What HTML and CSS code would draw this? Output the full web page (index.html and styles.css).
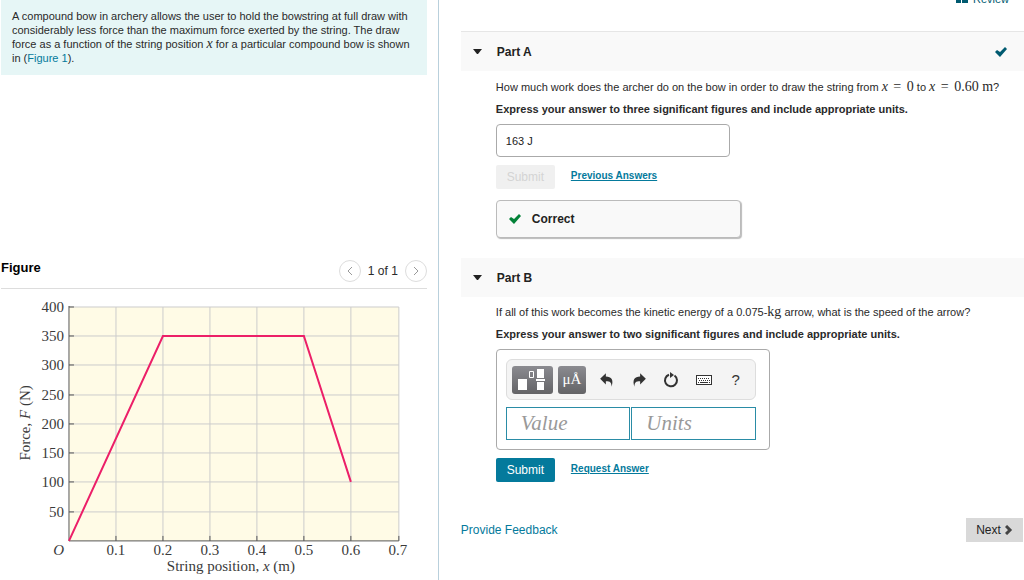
FILE: index.html
```html
<!DOCTYPE html>
<html lang="en">
  <head>
    <meta charset="UTF-8" />
    <meta name="viewport" content="width=device-width, initial-scale=1.0" />
    <title>Compound Bow</title>
    <link rel="stylesheet" href="styles.css" />
  </head>
  <body>
    <div class="page">
      <section class="left-pane">
        <div class="prompt">
          A compound bow in archery allows the user to hold the bowstring at full draw with
          considerably less force than the maximum force exerted by the string. The draw
          force as a function of the string position <i class="math">x</i> for a particular compound bow is shown
          in (<a href="#figure">Figure 1</a>).
        </div>

        <div class="figure" id="figure">
          <div class="figure-header">
            <h2>Figure</h2>
            <div class="pager">
              <button type="button" class="round" aria-label="Previous figure">
                <svg width="8" height="12" viewBox="0 0 8 12"><path d="M6 2 L2 6 L6 10" /></svg>
              </button>
              <span>1 of 1</span>
              <button type="button" class="round" aria-label="Next figure">
                <svg width="8" height="12" viewBox="0 0 8 12"><path d="M2 2 L6 6 L2 10" /></svg>
              </button>
            </div>
          </div>

          <svg class="graph" viewBox="0 0 426 290" role="img" aria-label="Force versus string position">
            <rect class="plot" x="68" y="18" width="330" height="234" />
            <path class="grid" d="M68 18H398 M68 47H398 M68 76H398 M68 106H398 M68 135H398 M68 164H398 M68 193H398 M68 223H398
              M115 18V252 M162 18V252 M209 18V252 M256 18V252 M303 18V252 M350 18V252 M398 18V252" />
            <path class="axis" d="M68 17V252H398
              M68 18h5 M68 47h5 M68 76h5 M68 106h5 M68 135h5 M68 164h5 M68 193h5 M68 223h5
              M115 252v-5 M162 252v-5 M209 252v-5 M256 252v-5 M303 252v-5 M350 252v-5 M398 252v-5" />
            <path class="curve" d="M68 252 L162 47 H303 L350 193" />
            <g class="y-labels">
              <text x="63" y="23">400</text>
              <text x="63" y="52">350</text>
              <text x="63" y="81">300</text>
              <text x="63" y="111">250</text>
              <text x="63" y="140">200</text>
              <text x="63" y="169">150</text>
              <text x="63" y="198">100</text>
              <text x="63" y="228">50</text>
              <text x="63" y="266" class="var">O</text>
            </g>
            <g class="x-labels">
              <text x="115" y="266">0.1</text>
              <text x="162" y="266">0.2</text>
              <text x="209" y="266">0.3</text>
              <text x="256" y="266">0.4</text>
              <text x="303" y="266">0.5</text>
              <text x="350" y="266">0.6</text>
              <text x="397" y="266">0.7</text>
              <text x="230" y="282">String position, <tspan class="var">x</tspan> (m)</text>
              <text transform="translate(29 134) rotate(-90)">Force, <tspan class="var">F</tspan> (N)</text>
            </g>
          </svg>
        </div>
      </section>

      <main class="right-pane">
        <div class="top-bar">
          <a href="#review">
            <svg width="12" height="10" viewBox="0 0 12 10"><path d="M0 1h5v9H0z M6 1h6v9H6z" fill="currentColor" /></svg>
            Review
          </a>
        </div>

        <section class="part part-a">
          <div class="part-header">
            <button type="button" class="toggle" aria-expanded="true">
              <svg width="9" height="5" viewBox="0 0 9 5"><path d="M0 0h9L5 5H4z" fill="currentColor" /></svg>
              Part A
            </button>
            <svg class="done" width="12" height="10" viewBox="0 0 12 10"><path d="M0 5l2-2 3 2 5-5 2 2-7 8z" fill="currentColor" /></svg>
          </div>
          <div class="part-body">
            <p>
              How much work does the archer do on the bow in order to draw the string from
              <span class="math"><i>x</i> <span class="eq">=</span> 0</span> to
              <span class="math"><i>x</i> <span class="eq">=</span> 0.60 m</span>?
            </p>
            <label class="instruction" for="answerA">Express your answer to three significant figures and include appropriate units.</label>
            <input type="text" class="answer" id="answerA" value="163 J" readonly />
            <div class="actions">
              <button type="button" class="submit" disabled>Submit</button>
              <a href="#previous">Previous Answers</a>
            </div>
            <div class="feedback">
              <svg width="12" height="10" viewBox="0 0 12 10"><path d="M0 5l2-2 3 2 5-5 2 2-7 8z" fill="currentColor" /></svg>
              Correct
            </div>
          </div>
        </section>

        <section class="part part-b">
          <div class="part-header">
            <button type="button" class="toggle" aria-expanded="true">
              <svg width="9" height="5" viewBox="0 0 9 5"><path d="M0 0h9L5 5H4z" fill="currentColor" /></svg>
              Part B
            </button>
          </div>
          <div class="part-body">
            <p>
              If all of this work becomes the kinetic energy of a 0.075-<span class="math">kg</span> arrow, what is the speed of the arrow?
            </p>
            <label class="instruction" for="valueB">Express your answer to two significant figures and include appropriate units.</label>
            <div class="editor">
              <div class="toolbar">
                <button type="button" class="dark templates" aria-label="Templates">
                  <svg width="28" height="22" viewBox="0 0 28 22">
                    <path d="M0 10h9v11H0z M19 0h7v9h-7z M18 10h9v2h-9z M19 13h7v8h-7z" fill="#fff" />
                    <path d="M11.5 2.5h4v6h-4z" fill="none" stroke="#fff" />
                  </svg>
                </button>
                <button type="button" class="dark symbols">μÅ</button>
                <button type="button" class="tool" aria-label="Undo">
                  <svg width="16" height="16" viewBox="0 0 14 14"><path d="M1 6L6 1V4C11 4 13 7 11 13C11 9 10 8 6 8V11Z" fill="currentColor" /></svg>
                </button>
                <button type="button" class="tool" aria-label="Redo">
                  <svg width="16" height="16" viewBox="0 0 14 14"><path d="M13 6L8 1V4C3 4 1 7 3 13C3 9 4 8 8 8V11Z" fill="currentColor" /></svg>
                </button>
                <button type="button" class="tool" aria-label="Reset">
                  <svg width="16" height="16" viewBox="0 0 16 16">
                    <path d="M11.5 3.5A6 6 0 1 1 6 2.7" fill="none" stroke="currentColor" stroke-width="2" />
                    <path d="M7 0v6l4-3z" fill="currentColor" />
                  </svg>
                </button>
                <button type="button" class="tool" aria-label="Keyboard">
                  <svg width="18" height="12" viewBox="0 0 18 12">
                    <rect x="1.5" y="1.5" width="15" height="9" fill="#fff" stroke="currentColor" />
                    <path d="M3 4.5h12 M4 6.5h11" stroke-dasharray="1 1" stroke="currentColor" />
                    <path d="M3 8.500h1 M5 8.500h8 M14 8.500h1" stroke="currentColor" />
                  </svg>
                </button>
                <button type="button" class="tool help" aria-label="Help">?</button>
              </div>
              <div class="fields">
                <input type="text" id="valueB" placeholder="Value" />
                <input type="text" id="unitsB" placeholder="Units" aria-label="Units" />
              </div>
            </div>
            <div class="actions">
              <button type="button" class="submit">Submit</button>
              <a href="#request">Request Answer</a>
            </div>
          </div>
        </section>

        <footer>
          <a href="#feedback">Provide Feedback</a>
          <button type="button" class="next">
            Next
            <svg width="8" height="10" viewBox="0 0 8 10"><path d="M1 1L5 5L1 9" fill="none" stroke="#444" stroke-width="3" /></svg>
          </button>
        </footer>
      </main>
    </div>
  </body>
</html>
```
FILE: styles.css
```css
* {
  box-sizing: border-box;
}

body {
  margin: 0;
  font-family: "Liberation Sans", Arial, sans-serif;
  font-size: 11px;
  line-height: 14px;
  color: #2a2a2a;
  background-color: #fff;
}

a {
  color: #047a9c;
  text-decoration: none;
}

button {
  font-family: inherit;
  padding: 0;
  border: none;
  cursor: pointer;
}

.page {
  display: grid;
  grid-template-columns: 3fr 4fr;
  min-height: 100vh;
}

.left-pane {
  padding: 0 11px 0 1px;
  border-right: 1px solid #b9d0dc;
}

.prompt {
  padding: 9px 11px 10px;
  background-color: #e6f6f6;
}

.math {
  font-family: "Liberation Serif", "Times New Roman", serif;
  font-size: 14px;
  line-height: 0;
}

.eq {
  margin: 0 2px;
}

/* figure */
.figure {
  margin-top: 181px;
}

.figure-header {
  display: flex;
  justify-content: space-between;
  height: 33px;
  border-bottom: 1px solid #ddd;
}

.figure-header h2 {
  margin: 5px 0 0;
  font-size: 13px;
  line-height: 14px;
  color: #000;
}

.pager {
  display: flex;
  align-items: center;
  gap: 7px;
  height: 30px;
  font-size: 12px;
}

.round {
  display: flex;
  align-items: center;
  justify-content: center;
  width: 22px;
  height: 22px;
  border: 1px solid #ddd;
  border-radius: 50%;
  background-color: #fff;
}

.round path {
  fill: none;
  stroke: #999;
}

.graph {
  display: block;
  width: 100%;
}

.graph text {
  font-family: "Liberation Serif", "Times New Roman", serif;
  font-size: 15px;
  fill: #3a3a3a;
}

.graph .var {
  font-style: italic;
}

.y-labels text {
  text-anchor: end;
}

.x-labels text {
  text-anchor: middle;
}

.plot {
  fill: #fffbe6;
}

.grid {
  stroke: #ccc;
}

.axis {
  fill: none;
  stroke: #555;
}

.curve {
  fill: none;
  stroke: #ec1f68;
  stroke-width: 2;
}

/* right side */
.right-pane {
  padding-left: 22px;
}

.top-bar {
  height: 31px;
  padding-right: 15px;
  overflow: hidden;
  text-align: right;
}

.top-bar a {
  display: block;
  margin-top: -8px;
  font-size: 11px;
  color: #005a70;
}

.top-bar svg {
  margin-right: 2px;
}

.part-header {
  display: flex;
  align-items: center;
  justify-content: space-between;
  height: 39px;
  padding: 0 17px 0 12px;
  background-color: #f9f9f9;
}

.part-a .part-header {
  height: 40px;
  border-top: 1px solid #e6e6e6;
}

.toggle {
  display: flex;
  align-items: center;
  gap: 15px;
  font-size: 12px;
  font-weight: bold;
  color: #222;
  background: none;
}

.done {
  color: #005a70;
}

.part-body {
  padding: 8px 0 20px 35px;
}

.part-b .part-body {
  padding-top: 7px;
}

.part-body p {
  margin: 0 0 7px;
  line-height: 16px;
}

.instruction {
  display: block;
  margin-bottom: 8px;
  font-weight: bold;
}

.answer {
  display: block;
  width: 234px;
  height: 33px;
  padding: 0 9px;
  border: 1px solid #aaa;
  border-radius: 4px;
  font-family: inherit;
  font-size: 11px;
  color: #222;
}

.actions {
  display: flex;
  gap: 16px;
  margin-top: 8px;
}

.actions a {
  margin-top: 4px;
  font-size: 10px;
  font-weight: bold;
  text-decoration: underline;
}

.submit {
  width: 59px;
  height: 24px;
  border-radius: 2px;
  font-size: 12px;
  color: #fff;
  background-color: #047a9c;
}

.submit:disabled {
  color: #d4d4d4;
  background-color: #f0f0f0;
}

.feedback {
  display: flex;
  align-items: center;
  gap: 11px;
  width: 245px;
  height: 38px;
  margin-top: 11px;
  padding-left: 12px;
  border: 1px solid #bbb;
  border-radius: 4px;
  box-shadow: 1px 1px 1px #bbb;
  font-size: 12px;
  font-weight: bold;
  color: #222;
  background-color: #f9f9f9;
}

.feedback svg {
  color: #038238;
}

/* answer editor */
.editor {
  width: 274px;
  padding: 9px;
  border: 1px solid #aaa;
  border-radius: 4px;
}

.toolbar {
  display: flex;
  align-items: center;
  height: 41px;
  margin-right: 4px;
  padding: 0 3px 0 5px;
  border: 1px solid #ddd;
  border-radius: 6px;
  background-color: #f4f4f4;
}

.dark {
  display: flex;
  align-items: center;
  justify-content: center;
  height: 28px;
  margin-right: 5px;
  border-radius: 3px;
  color: #fff;
  background: linear-gradient(#8b8b90, #636366);
}

.templates {
  width: 41px;
}

.symbols {
  width: 28px;
  font-family: "Liberation Serif", "Times New Roman", serif;
  font-size: 15px;
}

.tool {
  flex: 1;
  display: flex;
  align-items: center;
  justify-content: center;
  height: 28px;
  color: #333;
  background: none;
}

.help {
  font-size: 15px;
}

.fields {
  display: flex;
  gap: 1px;
  margin: 7px 4px 0 0;
}

.fields input {
  width: 50%;
  height: 33px;
  padding: 0 14px;
  border: 1px solid #2a8ca6;
  font-family: "Liberation Serif", "Times New Roman", serif;
  font-size: 21px;
  font-style: italic;
}

.fields input::placeholder {
  color: #999;
}

footer {
  display: flex;
  align-items: center;
  justify-content: space-between;
  margin-top: 16px;
  padding-right: 1px;
  font-size: 12px;
}

.next {
  display: flex;
  align-items: center;
  justify-content: center;
  gap: 4px;
  width: 57px;
  height: 24px;
  font-size: 12px;
  color: #222;
  background-color: #d9d9d9;
}
```
